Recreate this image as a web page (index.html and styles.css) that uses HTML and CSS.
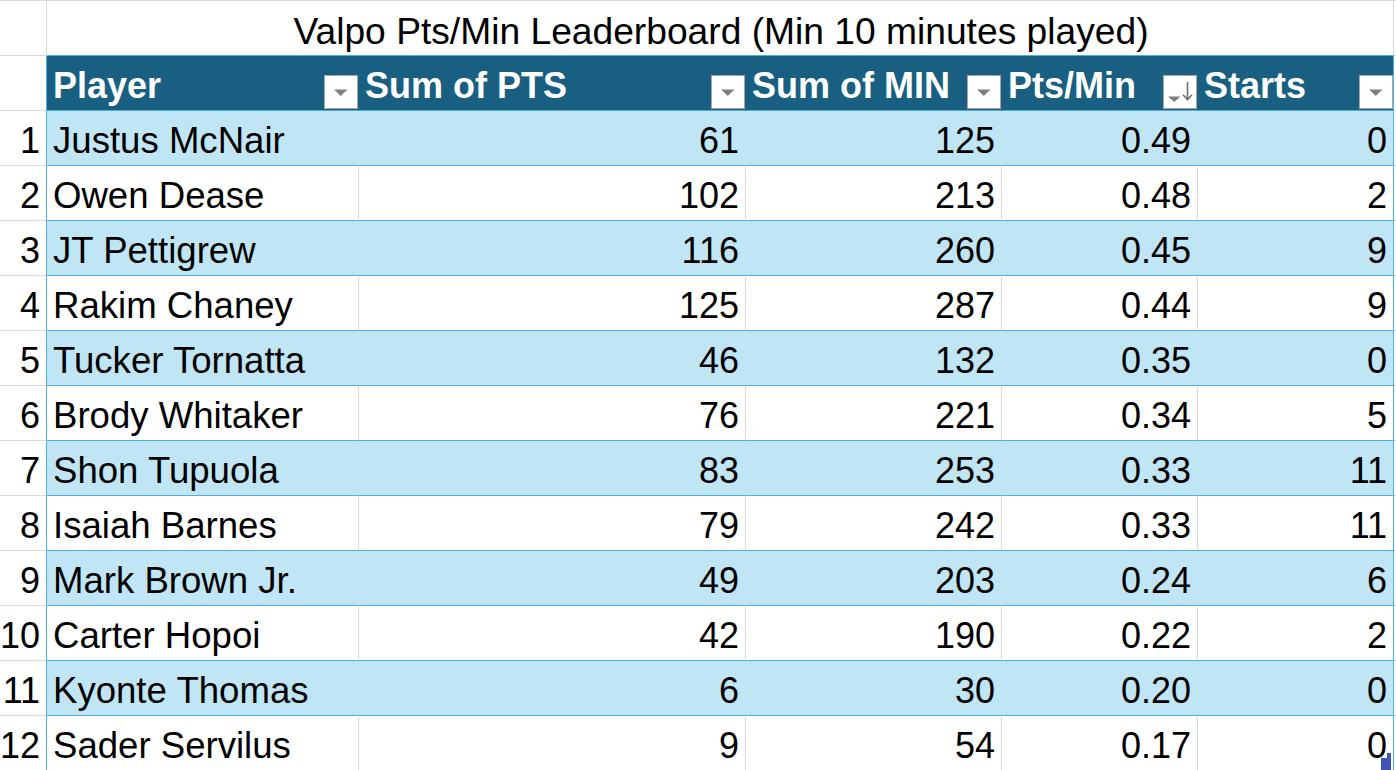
FILE: index.html
```html
<!DOCTYPE html>
<html lang="en">
<head>
<meta charset="utf-8">
<title>Valpo Pts/Min Leaderboard</title>
<link rel="stylesheet" href="styles.css">
</head>
<body>
<div class="sheet">
  <!-- title row -->
  <div class="cell num title-num"></div>
  <div class="cell title">Valpo Pts/Min Leaderboard (Min 10 minutes played)</div>
  <div class="cell fill"></div>

  <!-- header row -->
  <div class="cell num head-num"></div>
  <div class="cell head"><span class="htext">Player</span><span class="dd"><svg width="34" height="34" viewBox="0 0 34 34"><rect x="0.5" y="0.5" width="33" height="33" fill="#fff" stroke="#a6a6a6"/><polygon points="10,14.5 23.5,14.5 16.75,21" fill="#7f7f7f"/></svg></span></div>
  <div class="cell head"><span class="htext">Sum of PTS</span><span class="dd"><svg width="34" height="34" viewBox="0 0 34 34"><rect x="0.5" y="0.5" width="33" height="33" fill="#fff" stroke="#a6a6a6"/><polygon points="10,14.5 23.5,14.5 16.75,21" fill="#7f7f7f"/></svg></span></div>
  <div class="cell head"><span class="htext">Sum of MIN</span><span class="dd"><svg width="34" height="34" viewBox="0 0 34 34"><rect x="0.5" y="0.5" width="33" height="33" fill="#fff" stroke="#a6a6a6"/><polygon points="10,14.5 23.5,14.5 16.75,21" fill="#7f7f7f"/></svg></span></div>
  <div class="cell head"><span class="htext">Pts/Min</span><span class="dd"><svg width="34" height="34" viewBox="0 0 34 34"><rect x="0.5" y="0.5" width="33" height="33" fill="#fff" stroke="#a6a6a6"/><polygon points="5,21.5 17.5,21.5 11.25,27" fill="#7f7f7f"/><line x1="24.5" y1="7" x2="24.5" y2="24.5" stroke="#6e6e6e" stroke-width="1.6"/><polyline points="20,19.8 24.5,24.5 29,19.8" fill="none" stroke="#6e6e6e" stroke-width="1.6"/></svg></span></div>
  <div class="cell head last"><span class="htext">Starts</span><span class="dd"><svg width="34" height="34" viewBox="0 0 34 34"><rect x="0.5" y="0.5" width="33" height="33" fill="#fff" stroke="#a6a6a6"/><polygon points="10,14.5 23.5,14.5 16.75,21" fill="#7f7f7f"/></svg></span></div>
  <div class="cell fill"></div>

  <div class="cell num">1</div><div class="cell band name">Justus McNair</div><div class="cell band val">61</div><div class="cell band val">125</div><div class="cell band val">0.49</div><div class="cell band val last">0</div><div class="cell fill"></div>
  <div class="cell num">2</div><div class="cell plain name">Owen Dease</div><div class="cell plain val">102</div><div class="cell plain val">213</div><div class="cell plain val">0.48</div><div class="cell plain val last">2</div><div class="cell fill"></div>
  <div class="cell num">3</div><div class="cell band name">JT Pettigrew</div><div class="cell band val">116</div><div class="cell band val">260</div><div class="cell band val">0.45</div><div class="cell band val last">9</div><div class="cell fill"></div>
  <div class="cell num">4</div><div class="cell plain name">Rakim Chaney</div><div class="cell plain val">125</div><div class="cell plain val">287</div><div class="cell plain val">0.44</div><div class="cell plain val last">9</div><div class="cell fill"></div>
  <div class="cell num">5</div><div class="cell band name">Tucker Tornatta</div><div class="cell band val">46</div><div class="cell band val">132</div><div class="cell band val">0.35</div><div class="cell band val last">0</div><div class="cell fill"></div>
  <div class="cell num">6</div><div class="cell plain name">Brody Whitaker</div><div class="cell plain val">76</div><div class="cell plain val">221</div><div class="cell plain val">0.34</div><div class="cell plain val last">5</div><div class="cell fill"></div>
  <div class="cell num">7</div><div class="cell band name">Shon Tupuola</div><div class="cell band val">83</div><div class="cell band val">253</div><div class="cell band val">0.33</div><div class="cell band val last">11</div><div class="cell fill"></div>
  <div class="cell num">8</div><div class="cell plain name">Isaiah Barnes</div><div class="cell plain val">79</div><div class="cell plain val">242</div><div class="cell plain val">0.33</div><div class="cell plain val last">11</div><div class="cell fill"></div>
  <div class="cell num">9</div><div class="cell band name">Mark Brown Jr.</div><div class="cell band val">49</div><div class="cell band val">203</div><div class="cell band val">0.24</div><div class="cell band val last">6</div><div class="cell fill"></div>
  <div class="cell num">10</div><div class="cell plain name">Carter Hopoi</div><div class="cell plain val">42</div><div class="cell plain val">190</div><div class="cell plain val">0.22</div><div class="cell plain val last">2</div><div class="cell fill"></div>
  <div class="cell num">11</div><div class="cell band name">Kyonte Thomas</div><div class="cell band val">6</div><div class="cell band val">30</div><div class="cell band val">0.20</div><div class="cell band val last">0</div><div class="cell fill"></div>
  <div class="cell num">12</div><div class="cell plain name">Sader Servilus</div><div class="cell plain val">9</div><div class="cell plain val">54</div><div class="cell plain val">0.17</div><div class="cell plain val last corner">0<span class="handle"><svg width="10" height="18" viewBox="0 0 10 18"><path d="M6 0 H10 V18 H0 V5 H6 Z" fill="#3f54b4"/></svg></span></div><div class="cell fill"></div>
</div>
</body>
</html>
```

FILE: styles.css
```css
html, body {
  margin: 0;
  padding: 0;
  background: #ffffff;
  overflow: hidden;
}

.sheet {
  display: grid;
  grid-template-columns: 47px 312px 387px 256px 196px 196px 1fr;
  grid-auto-rows: 55px;
  border-top: 1px solid #dadada;
  font-family: "Liberation Sans", Arial, sans-serif;
  font-size: 36px;
  color: #000;
  width: 1396px;
}

.cell {
  box-sizing: border-box;
  display: flex;
  align-items: flex-end;
  white-space: nowrap;
  border-right: 1px solid transparent;
  border-bottom: 1px solid #4faddf;
  padding-bottom: 3px;
  overflow: hidden;
}

.num {
  justify-content: flex-end;
  padding-right: 6px;
  border-right: 1px solid #4faddf;
  border-bottom: 1px solid #dadada;
}

.title-num {
  border-right: 1px solid #dadada;
}

.fill {
  border-right: none;
  border-bottom: 1px solid #dadada;
}

.title {
  grid-column: 2 / 7;
  justify-content: center;
  font-size: 37.2px;
  padding-bottom: 2px;
  border-right: 1px solid #dadada;
  border-bottom: 1px solid #4faddf;
  padding-left: 2px;
}

.head {
  background: #185f81;
  color: #ffffff;
  font-weight: bold;
  justify-content: space-between;
  padding: 0 0 0 6px;
  border-right-color: #185f81;
}

.htext {
  padding-bottom: 3px;
}

.dd {
  display: block;
  width: 34px;
  height: 34px;
  margin-bottom: 1px;
  flex: none;
}

.dd svg {
  display: block;
}

.band {
  background: #c0e6f5;
  border-right-color: #c0e6f5;
}

.plain {
  background: #ffffff;
  border-right-color: #dadada;
}

.name {
  padding-left: 6px;
  font-size: 36.6px;
}

.val {
  justify-content: flex-end;
  padding-right: 6px;
}

.last {
  border-right-color: #4faddf;
}

.corner {
  position: relative;
}

.handle {
  position: absolute;
  right: 2px;
  top: 37px;
  width: 10px;
  height: 18px;
}

.handle svg {
  display: block;
}
```
